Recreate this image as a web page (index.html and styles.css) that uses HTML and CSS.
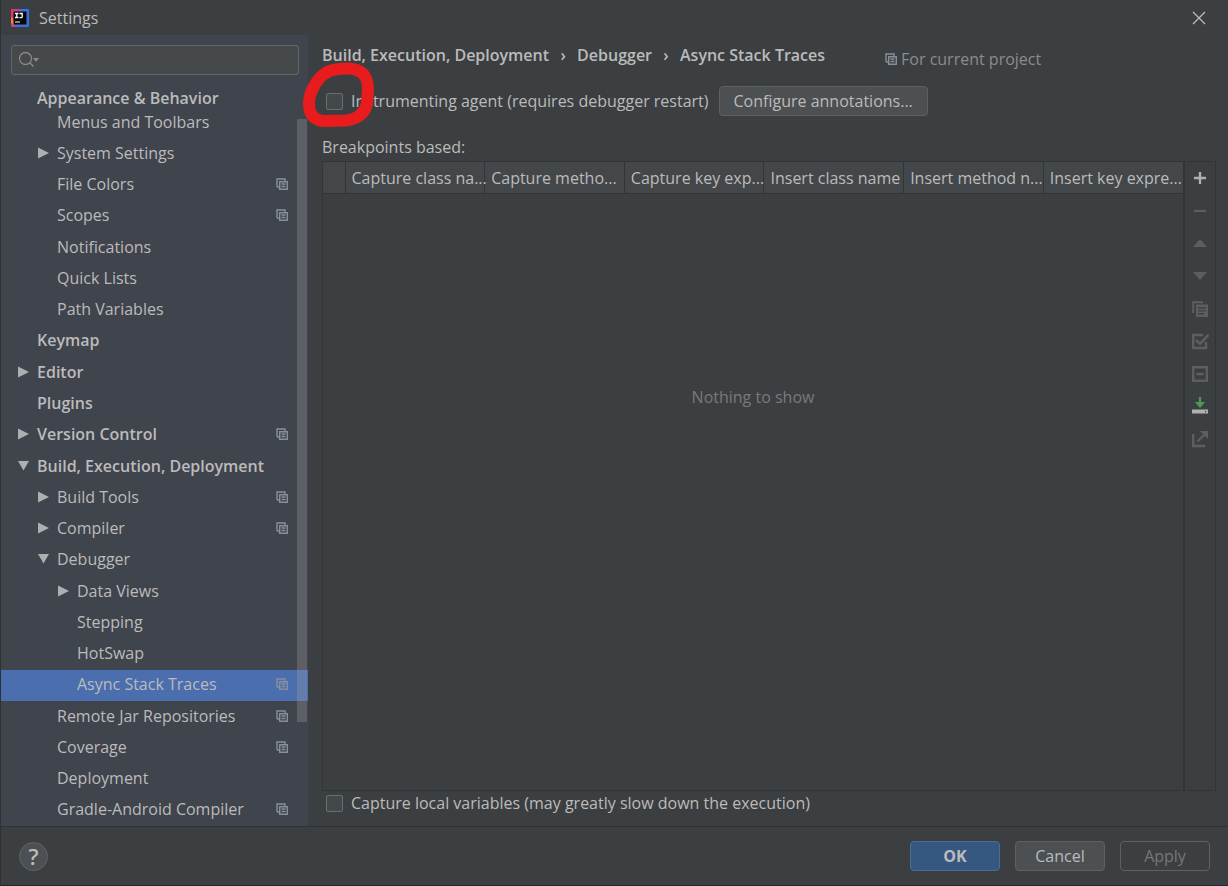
FILE: index.html
```html
<!DOCTYPE html>
<html lang="en">
<head>
<meta charset="utf-8">
<title>Settings</title>
<link rel="stylesheet" href="styles.css">
</head>
<body>
<svg class="defs" aria-hidden="true">
  <symbol id="project" viewBox="0 0 12 12"><path d="M1 9V1h8v2M1 9h2" fill="none" stroke="currentColor" stroke-width="1.4"/><path d="M3.700 3.700h7.600v7.600h-7.600zM5.500 6h4M5.500 8.500h4" fill="none" stroke="currentColor" stroke-width="1.400"/></symbol>
  <symbol id="closed" viewBox="0 0 12 12"><path d="M1 0.500L12 6 1 11.500z" fill="currentColor"/></symbol>
  <symbol id="open" viewBox="0 0 12 12"><path d="M1 1h11L6.500 10.500z" fill="currentColor"/></symbol>
</svg>
<div class="window">
  <header class="titlebar">
    <svg class="logo" viewBox="0 0 18 18">
      <defs><linearGradient id="lg" x1="0" y1="0" x2="1" y2="0.300"><stop offset="0" stop-color="#f0325c"/><stop offset="0.400" stop-color="#b0479a"/><stop offset="0.600" stop-color="#3b6fe0"/><stop offset="1" stop-color="#3472dc"/></linearGradient></defs>
      <rect width="18" height="18" rx="1" fill="url(#lg)"/>
      <path d="M0 8l3 3v5l-3-2z" fill="#f58529"/>
      <rect x="2.500" y="2.500" width="13" height="13" fill="#08080a"/>
      <path d="M4 4.500h3.500M5.750 4.500v4M4 8.500h3.500M8.500 4.500h2.700v3q0 1.200-1.200 1.200H8.500" fill="none" stroke="#fff" stroke-width="1.300"/>
      <path d="M4 13h5" stroke="#ddd" stroke-width="1.200"/>
    </svg>
    <h1 class="title">Settings</h1>
    <button class="close" aria-label="Close"><svg viewBox="0 0 14 14"><path d="M1 1l12 12M13 1L1 13" stroke="currentColor" stroke-width="1.300"/></svg></button>
  </header>

  <div class="body">
    <aside class="sidebar">
      <label class="search">
        <svg viewBox="0 0 22 18"><circle cx="7.500" cy="7.500" r="6" fill="none" stroke="currentColor" stroke-width="1.300"/><path d="M11.500 11.500l4 4" stroke="currentColor" stroke-width="1.600"/><path d="M15 7h6l-3 4z" fill="currentColor"/></svg>
        <input type="text" aria-label="Search settings">
      </label>
      <div class="group-title">Appearance &amp; Behavior</div>
      <ul class="tree">
        <li class="row l1"><span class="arrow"></span><span class="name">Menus and Toolbars</span></li>
        <li class="row l1"><svg class="arrow"><use href="#closed"/></svg><span class="name">System Settings</span></li>
        <li class="row l1"><span class="arrow"></span><span class="name">File Colors</span><svg class="mark"><use href="#project"/></svg></li>
        <li class="row l1"><span class="arrow"></span><span class="name">Scopes</span><svg class="mark"><use href="#project"/></svg></li>
        <li class="row l1"><span class="arrow"></span><span class="name">Notifications</span></li>
        <li class="row l1"><span class="arrow"></span><span class="name">Quick Lists</span></li>
        <li class="row l1"><span class="arrow"></span><span class="name">Path Variables</span></li>
        <li class="row l0"><span class="arrow"></span><span class="name">Keymap</span></li>
        <li class="row l0"><svg class="arrow"><use href="#closed"/></svg><span class="name">Editor</span></li>
        <li class="row l0"><span class="arrow"></span><span class="name">Plugins</span></li>
        <li class="row l0"><svg class="arrow"><use href="#closed"/></svg><span class="name">Version Control</span><svg class="mark"><use href="#project"/></svg></li>
        <li class="row l0"><svg class="arrow"><use href="#open"/></svg><span class="name">Build, Execution, Deployment</span></li>
        <li class="row l1"><svg class="arrow"><use href="#closed"/></svg><span class="name">Build Tools</span><svg class="mark"><use href="#project"/></svg></li>
        <li class="row l1"><svg class="arrow"><use href="#closed"/></svg><span class="name">Compiler</span><svg class="mark"><use href="#project"/></svg></li>
        <li class="row l1"><svg class="arrow"><use href="#open"/></svg><span class="name">Debugger</span></li>
        <li class="row l2"><svg class="arrow"><use href="#closed"/></svg><span class="name">Data Views</span></li>
        <li class="row l2"><span class="arrow"></span><span class="name">Stepping</span></li>
        <li class="row l2"><span class="arrow"></span><span class="name">HotSwap</span></li>
        <li class="row l2 selected"><span class="arrow"></span><span class="name">Async Stack Traces</span><svg class="mark"><use href="#project"/></svg></li>
        <li class="row l1"><span class="arrow"></span><span class="name">Remote Jar Repositories</span><svg class="mark"><use href="#project"/></svg></li>
        <li class="row l1"><span class="arrow"></span><span class="name">Coverage</span><svg class="mark"><use href="#project"/></svg></li>
        <li class="row l1"><span class="arrow"></span><span class="name">Deployment</span></li>
        <li class="row l1"><span class="arrow"></span><span class="name">Gradle-Android Compiler</span><svg class="mark"><use href="#project"/></svg></li>
      </ul>
      <div class="thumb"></div>
    </aside>

    <main class="content">
      <div class="heading">
        <nav class="crumbs"><span>Build, Execution, Deployment</span><span class="sep">›</span><span>Debugger</span><span class="sep">›</span><span>Async Stack Traces</span></nav>
        <div class="scope"><svg class="mark"><use href="#project"/></svg><span>For current project</span></div>
      </div>
      <div class="agent">
        <label class="check"><input type="checkbox"><span>Instrumenting agent (requires debugger restart)</span></label>
        <button class="btn configure">Configure annotations...</button>
        <svg class="marker" viewBox="0 0 72 66"><path d="M34 7.500C22 9 16 17 11 26C7 34 6 42 8 49C10 55 15 59 22 59L44 58.500C56 57 64 50 65 41L66 28C66 12 58 7 46 6.500C41 6.300 38 7 34 7.500Z" fill="none" stroke="#e81c1c" stroke-width="12" stroke-linejoin="round"/></svg>
      </div>
      <div class="caption">Breakpoints based:</div>
      <div class="panel">
        <div class="grid">
          <table>
            <thead><tr><th class="tick"></th><th>Capture class na...</th><th>Capture metho...</th><th>Capture key exp...</th><th>Insert class name</th><th>Insert method n...</th><th>Insert key expre...</th></tr></thead>
          </table>
          <div class="empty">Nothing to show</div>
        </div>
        <div class="toolbar">
          <div class="tools">
            <button class="add" aria-label="Add"><svg viewBox="0 0 18 18"><path d="M9 3v12M3 9h12" stroke="currentColor" stroke-width="2.400"/></svg></button>
            <button aria-label="Remove"><svg viewBox="0 0 18 18"><path d="M3 9h12" stroke="currentColor" stroke-width="2.200"/></svg></button>
            <button aria-label="Move up"><svg viewBox="0 0 18 18"><path d="M2 13l7-8 7 8z" fill="currentColor"/></svg></button>
            <button aria-label="Move down"><svg viewBox="0 0 18 18"><path d="M2 5h14l-7 8z" fill="currentColor"/></svg></button>
            <button aria-label="Copy"><svg viewBox="0 0 18 18"><path d="M2.200 13V2.200H12" fill="none" stroke="currentColor" stroke-width="2"/><path fill-rule="evenodd" fill="currentColor" d="M5 4.500h12v12.500H5zM7 7.300v1.400h8V7.300zM7 10.200v1.400h8v-1.400zM7 13.100v1.400h6v-1.400z"/></svg></button>
            <button aria-label="Enable selected"><svg viewBox="0 0 18 18"><path d="M12 3H2.200v13H15v-6" fill="none" stroke="currentColor" stroke-width="2.400"/><path d="M5 8l4 4 8.500-9" fill="none" stroke="currentColor" stroke-width="2.600"/></svg></button>
            <button aria-label="Disable selected"><svg viewBox="0 0 18 18"><path d="M2.200 2.200h13.600v13.600H2.200zM5.500 9h7" fill="none" stroke="currentColor" stroke-width="2.400"/></svg></button>
            <button class="import" aria-label="Import"><svg viewBox="0 0 18 18"><path d="M9 0v6" stroke="#499c54" stroke-width="2.200"/><path d="M4 5h10l-5 6z" fill="#499c54"/><path fill-rule="evenodd" d="M1 12.500h16v4H1zM14 14h1.200v1.200H14z" fill="#afb1b3"/></svg></button>
            <button aria-label="Export"><svg viewBox="0 0 18 18"><path d="M2.200 4v12H14" fill="none" stroke="currentColor" stroke-width="2.400"/><path d="M6.500 11.500L14 4" stroke="currentColor" stroke-width="2.400"/><path d="M9 1h8v8z" fill="currentColor"/></svg></button>
          </div>
        </div>
      </div>
      <label class="check"><input type="checkbox"><span>Capture local variables (may greatly slow down the execution)</span></label>
    </main>
  </div>

  <footer class="footer">
    <button class="help" aria-label="Help">?</button>
    <div class="actions">
      <button class="btn primary">OK</button>
      <button class="btn">Cancel</button>
      <button class="btn" disabled>Apply</button>
    </div>
  </footer>
</div>
</body>
</html>
```
FILE: styles.css
```css
* { box-sizing: border-box; }
body {
  margin: 0;
  background: #3c3f41;
  color: #bbbbbb;
  font: 16px/22px "Open Sans", "Noto Sans", sans-serif;
}
button, input { font: inherit; color: inherit; }
button { padding: 0; border: 0; background: none; }
.defs { display: none; }

.window {
  display: flex;
  flex-direction: column;
  height: 100vh;
  border-left: 1px solid #2f3234;
  border-bottom: 1px solid #232527;
}

.titlebar {
  display: flex;
  align-items: center;
  gap: 10px;
  height: 35px;
  padding: 0 22px 0 10px;
}
.logo { width: 18px; height: 18px; }
.title { flex: 1; margin: 0; font-size: 16px; font-weight: 400; }
.close { display: flex; }
.close svg { width: 14px; height: 14px; }

.body { display: flex; flex: 1; min-height: 0; }

.sidebar {
  position: relative;
  display: flex;
  flex-direction: column;
  flex: 0 0 307px;
  background: #40444d;
}
.search {
  display: flex;
  align-items: center;
  height: 30px;
  margin: 10px 9px 0 10px;
  padding: 0 6px;
  border: 1px solid #646768;
  border-radius: 3px;
  background: #45494a;
}
.search svg { width: 22px; height: 18px; color: #85888b; }
.search input { flex: 1; min-width: 0; border: 0; outline: 0; background: none; }
.group-title { padding: 14px 0 0 36px; line-height: 18px; font-weight: 600; }
.tree {
  display: flex;
  flex-direction: column;
  flex: 1;
  margin: 0;
  padding: 0;
  list-style: none;
}
.row {
  display: flex;
  flex: 1;
  align-items: center;
  gap: 8px;
  padding-right: 20px;
  padding-bottom: 2px;
  white-space: nowrap;
}
.l0 { padding-left: 16px; font-weight: 600; }
.l1 { padding-left: 36px; }
.l2 { padding-left: 56px; }
.selected { background: #4b6eaf; }
.arrow { width: 12px; height: 12px; color: #adafb1; }
.name { flex: 1; }
.mark { width: 12px; height: 12px; color: #87909a; }
.thumb {
  position: absolute;
  top: 84px;
  right: 1px;
  bottom: 104px;
  width: 10px;
  background: rgba(166, 166, 166, 0.28);
}

.content {
  display: flex;
  flex-direction: column;
  flex: 1;
  min-width: 0;
  padding: 9px 12px 12px 14px;
}
.heading { display: flex; gap: 60px; }
.crumbs { display: flex; font-weight: 600; }
.sep { width: 28px; text-align: center; }
.scope { display: flex; align-items: center; gap: 4px; padding-top: 4px; color: #8a8c8d; }
.agent { position: relative; display: flex; align-items: center; gap: 10px; padding: 16px 0 20px; }
.marker { position: absolute; top: -8px; left: -20px; width: 72px; height: 66px; pointer-events: none; }
.check { display: flex; align-items: center; gap: 8px; padding-left: 4px; }
.check input {
  appearance: none;
  width: 17px;
  height: 17px;
  margin: 0;
  border: 1px solid #6b6e70;
  border-radius: 2px;
  background: #43494a;
}
.btn {
  min-width: 90px;
  height: 30px;
  border: 1px solid #5e6162;
  border-radius: 4px;
  background: #4c5052;
}
.configure { padding: 0 14px; }
.caption { margin-bottom: 3px; }

.panel { display: flex; flex: 1; min-height: 0; margin-bottom: 1px; border: 1px solid #323537; }
.grid { display: flex; flex: 1; flex-direction: column; min-width: 0; }
table { width: 100%; table-layout: fixed; border-collapse: collapse; }
thead { background: #44474a; }
th {
  height: 31px;
  padding: 2px 0 0 6px;
  border-left: 1px solid #323537;
  border-bottom: 1px solid #323537;
  font-weight: 400;
  text-align: left;
  white-space: nowrap;
}
.tick { width: 22px; padding: 0; border-left: 0; }
.empty { padding-top: 192px; color: #787a7c; text-align: center; }
.toolbar { width: 32px; border-left: 2px solid #323537; }
.tools { display: flex; flex-direction: column; height: 293px; }
.tools button { display: flex; flex: 1; align-items: center; justify-content: center; color: #5c5f61; }
.tools svg { width: 18px; height: 18px; }
.tools .add { color: #afb1b3; }

.footer {
  display: flex;
  align-items: center;
  justify-content: space-between;
  height: 59px;
  padding: 0 18px;
  border-top: 1px solid #2e3133;
}
.help {
  width: 29px;
  height: 29px;
  border: 1px solid #616466;
  border-radius: 50%;
  background: #4c5052;
  font-size: 22px;
  font-weight: 600;
}
.actions { display: flex; gap: 15px; }
.primary { border-color: #4c708c; background: #365880; font-weight: 700; }
.btn:disabled { background: none; color: #777777; }
```
